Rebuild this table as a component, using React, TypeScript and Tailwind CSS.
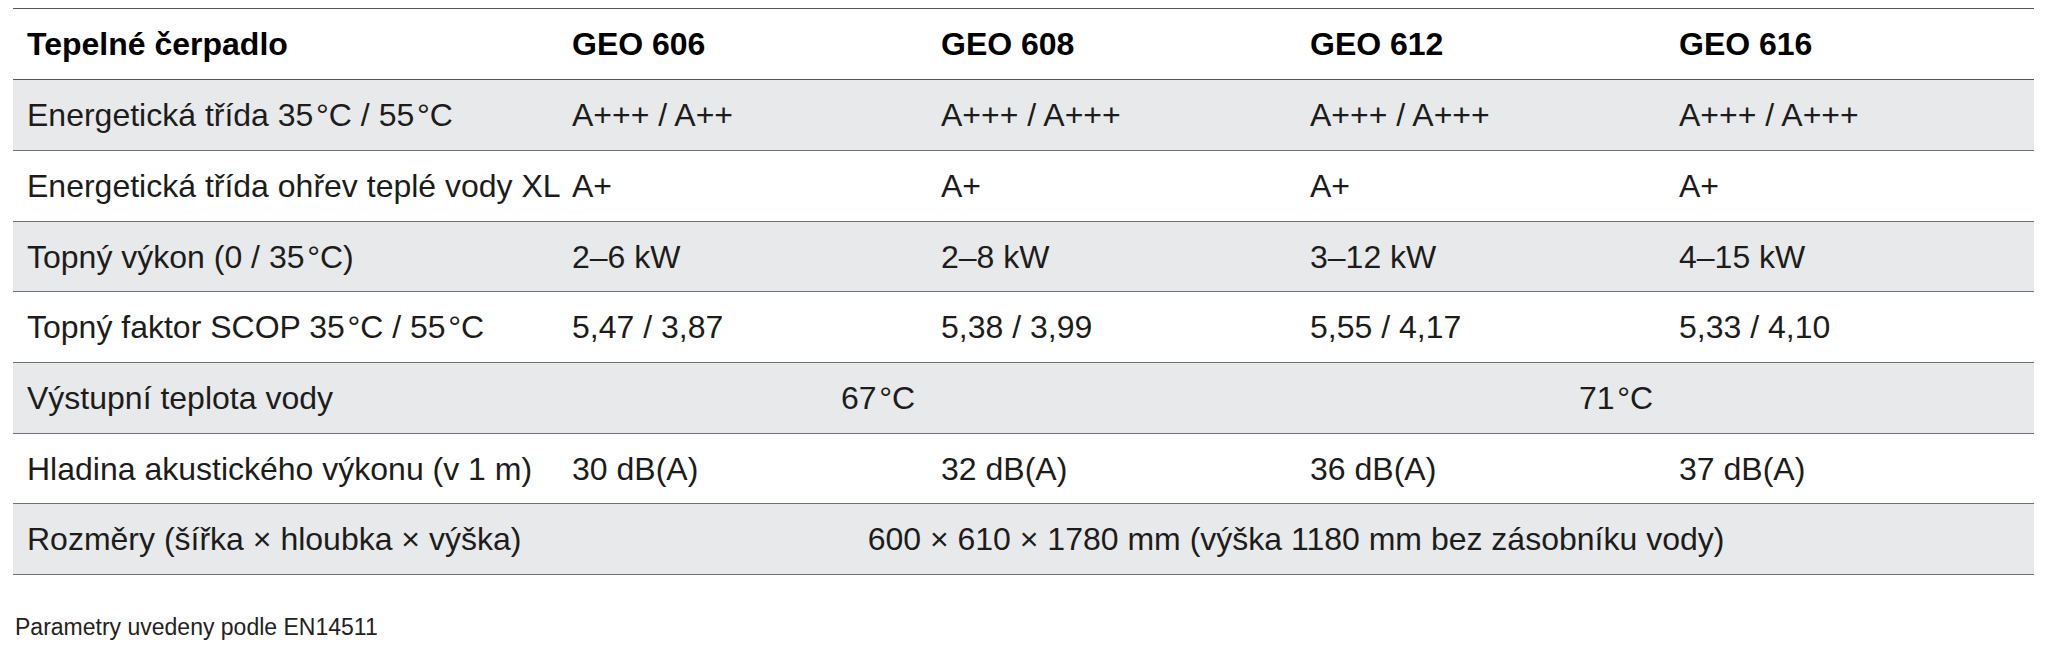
const rows: { label: string; cells: { text: string; span?: number; extra?: string }[]; gray: boolean }[] = [
  {
    label: 'Energetická třída 35\u200a°C / 55\u200a°C',
    cells: [{ text: 'A+++ / A++' }, { text: 'A+++ / A+++' }, { text: 'A+++ / A+++' }, { text: 'A+++ / A+++' }],
    gray: true,
  },
  {
    label: 'Energetická třída ohřev teplé vody XL',
    cells: [{ text: 'A+' }, { text: 'A+' }, { text: 'A+' }, { text: 'A+' }],
    gray: false,
  },
  {
    label: 'Topný výkon (0 / 35\u200a°C)',
    cells: [{ text: '2–6 kW' }, { text: '2–8 kW' }, { text: '3–12 kW' }, { text: '4–15 kW' }],
    gray: true,
  },
  {
    label: 'Topný faktor SCOP 35\u200a°C / 55\u200a°C',
    cells: [{ text: '5,47 / 3,87' }, { text: '5,38 / 3,99' }, { text: '5,55 / 4,17' }, { text: '5,33 / 4,10' }],
    gray: false,
  },
  {
    label: 'Výstupní teplota vody',
    cells: [
      { text: '67\u200a°C', span: 2, extra: 'text-center pr-[98px]' },
      { text: '71\u200a°C', span: 2, extra: 'text-center pr-[98px]' },
    ],
    gray: true,
  },
  {
    label: 'Hladina akustického výkonu (v 1 m)',
    cells: [{ text: '30 dB(A)' }, { text: '32 dB(A)' }, { text: '36 dB(A)' }, { text: '37 dB(A)' }],
    gray: false,
  },
  {
    label: 'Rozměry (šířka × hloubka × výška)',
    cells: [{ text: '600 × 610 × 1780 mm (výška 1180 mm bez zásobníku vody)', span: 4, extra: 'text-center' }],
    gray: true,
  },
];

const models = ['GEO 606', 'GEO 608', 'GEO 612', 'GEO 616'];

export default function App() {
  return (
    <div className="w-[2048px] h-[663px] bg-white text-black font-['Liberation_Sans',Arial,sans-serif]">
      <div className="pt-[8px] pl-[13px]">
        <table className="table-fixed w-[2021px] border-t border-[#55595d]">
          <colgroup>
            <col className="w-[545px]" />
            <col className="w-[369px]" />
            <col className="w-[369px]" />
            <col className="w-[369px]" />
            <col className="w-[369px]" />
          </colgroup>
          <thead>
            <tr className="h-[71px] border-b border-[#55595d]">
              <th className="text-left font-bold text-[32px] pl-[14px] align-middle">Tepelné čerpadlo</th>
              {models.map((m) => (
                <th key={m} className="text-left font-bold text-[32px] pl-[14px] align-middle">
                  {m}
                </th>
              ))}
            </tr>
          </thead>
          <tbody className="text-[#1c1c1c]">
            {rows.map((r, i) => (
              <tr
                key={i}
                className={`${i % 3 === 2 ? 'h-[70px]' : 'h-[71px]'} border-b border-[#6f7377] ${r.gray ? 'bg-[#e8e9eb]' : 'bg-white'}`}
              >
                <td className="text-[32px] pl-[14px] align-middle whitespace-nowrap">{r.label}</td>
                {r.cells.map((c, j) => (
                  <td
                    key={j}
                    colSpan={c.span ?? 1}
                    className={`text-[32px] align-middle whitespace-nowrap ${c.extra ?? 'pl-[14px] text-left'}`}
                  >
                    {c.text}
                  </td>
                ))}
              </tr>
            ))}
          </tbody>
        </table>
        <p className="mt-[35px] pl-[2px] text-[23px] text-[#222]">Parametry uvedeny podle EN14511</p>
      </div>
    </div>
  );
}
